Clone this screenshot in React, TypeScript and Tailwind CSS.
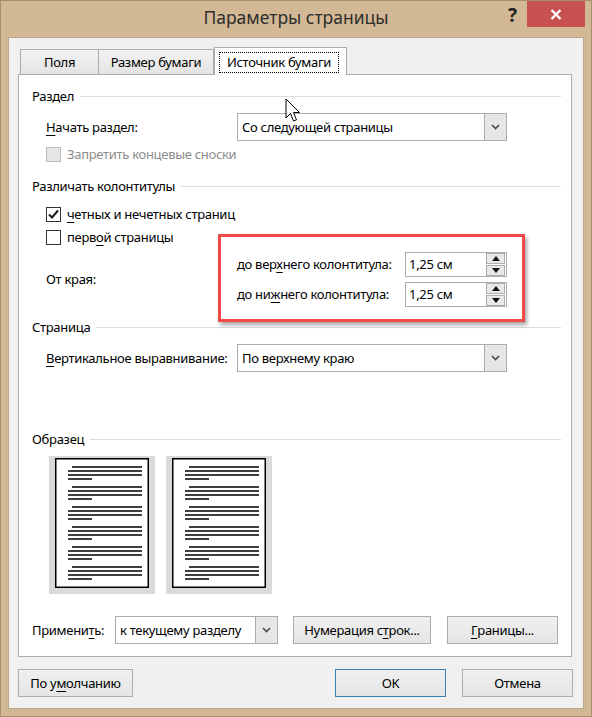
import React from "react";

const FONT = { fontFamily: '"Noto Sans", "Open Sans", sans-serif' };

function U({ children }: { children: React.ReactNode }) {
  return <span className="underline decoration-1 underline-offset-[3px]">{children}</span>;
}

function Header({ label, className = "" }: { label: string; className?: string }) {
  return (
    <div className={"flex h-[18px] items-center pl-[13px] pr-[10px] " + className}>
      <span className="text-black">{label}</span>
      <div className="ml-[6px] h-px flex-1 bg-[#dcdcdc]" />
    </div>
  );
}

function Chevron() {
  return (
    <svg width="9" height="6" viewBox="0 0 9 6">
      <path d="M1 1 L4.5 4.5 L8 1" stroke="#4a4a4a" strokeWidth="1.6" fill="none" />
    </svg>
  );
}

function Select({ value, className = "" }: { value: string; className?: string }) {
  return (
    <div className={"flex h-[28px] border border-[#acacac] bg-white " + className}>
      <div className="flex flex-1 items-center pl-[4px] text-black">{value}</div>
      <div className="flex w-[22px] items-center justify-center border-l border-[#acacac] bg-[#e6e6e6]">
        <Chevron />
      </div>
    </div>
  );
}

function Checkbox({ checked = false, disabled = false }: { checked?: boolean; disabled?: boolean }) {
  return (
    <div
      className={
        "flex h-[15px] w-[15px] items-center justify-center border " +
        (disabled ? "border-[#bcbcbc] bg-[#e6e6e6]" : "border-[#333333] bg-white")
      }
    >
      {checked && (
        <svg width="13" height="13" viewBox="0 0 13 13">
          <path d="M2 6.5 L5 9.5 L11 2.5" stroke="#1a1a1a" strokeWidth="2" fill="none" />
        </svg>
      )}
    </div>
  );
}

function Spinner({ value }: { value: string }) {
  return (
    <div className="flex h-[25px] w-[102px] border border-[#abadb3] bg-white">
      <div className="flex flex-1 items-center pl-[3px] text-black">{value}</div>
      <div className="flex flex-col justify-center gap-px pr-[1px]">
        <div className="flex h-[11px] w-[19px] items-center justify-center border border-[#acacac] bg-[#e8e8e8]">
          <svg width="8" height="5" viewBox="0 0 8 5">
            <path d="M0 5 L4 0 L8 5 Z" fill="#111" />
          </svg>
        </div>
        <div className="flex h-[11px] w-[19px] items-center justify-center border border-[#acacac] bg-[#e8e8e8]">
          <svg width="8" height="5" viewBox="0 0 8 5">
            <path d="M0 0 L8 0 L4 5 Z" fill="#111" />
          </svg>
        </div>
      </div>
    </div>
  );
}

function Button({ children, className = "", focused = false }: { children: React.ReactNode; className?: string; focused?: boolean }) {
  return (
    <div
      className={
        "flex h-[28px] items-center justify-center border bg-gradient-to-b from-[#f0f0f0] to-[#e5e5e5] text-black " +
        (focused ? "border-[#3c7fb1] " : "border-[#acacac] ") +
        className
      }
    >
      {children}
    </div>
  );
}

function PagePreview() {
  const groups = [0, 1, 2, 3, 4, 5];
  return (
    <svg width="106" height="138" viewBox="0 0 106 138">
      <rect x="0" y="0" width="106" height="138" fill="#dadada" />
      <rect x="6.75" y="2.75" width="92.5" height="128.5" fill="#ffffff" stroke="#000" strokeWidth="1.5" />
      {groups.map((g) => {
        const y = 2 + 9 + g * 20;
        return (
          <g key={g} stroke="#000" strokeWidth="1.5">
            <line x1={6 + 17} y1={y} x2={6 + 87} y2={y} />
            <line x1={6 + 13} y1={y + 4} x2={6 + 87} y2={y + 4} />
            <line x1={6 + 13} y1={y + 8} x2={6 + 87} y2={y + 8} />
            <line x1={6 + 13} y1={y + 12} x2={6 + 37} y2={y + 12} />
          </g>
        );
      })}
    </svg>
  );
}

export default function App() {
  return (
    <div
      className="relative h-[717px] w-[592px] overflow-hidden whitespace-nowrap border border-[#a58f6d] bg-[#d3b895] text-[13px] leading-none"
      style={FONT}
    >
      {/* Title bar */}
      <div className="relative flex h-[36px] items-start">
        <div className="flex h-[36px] flex-1 items-center justify-center pb-[2px] text-[17.5px] text-[#2d2d2d]">
          Параметры страницы
        </div>
        <div className="absolute right-[6px] top-0 flex items-start">
          <div className="mr-[10px] mt-[5px] text-[19px] font-bold text-[#222]">?</div>
          <div className="flex h-[26px] w-[58px] items-center justify-center bg-[#c75050]">
            <svg width="12" height="11" viewBox="0 0 12 11">
              <path d="M1.5 1 L10.5 10 M10.5 1 L1.5 10" stroke="#fff" strokeWidth="2.4" />
            </svg>
          </div>
        </div>
      </div>

      {/* Client area */}
      <div className="ml-[7px] flex h-[672px] w-[576px] flex-col border border-[#bba788] bg-[#f0f0f0] tracking-[-0.3px]">
        <div className="ml-[9px] mt-[9px] w-[554px]">
          {/* Tabs */}
          <div className="flex h-[27px] items-end pl-[2px]">
            <div className="flex h-[25px] w-[79px] items-center justify-center border border-b-0 border-[#acacac] bg-gradient-to-b from-[#f2f2f2] to-[#e4e4e4] text-black">
              Поля
            </div>
            <div className="flex h-[25px] w-[115px] items-center justify-center border border-b-0 border-l-0 border-[#acacac] bg-gradient-to-b from-[#f2f2f2] to-[#e4e4e4] text-black">
              Размер бумаги
            </div>
            <div className="relative z-10 -mb-px flex h-[28px] w-[133px] items-start border border-b-0 border-[#acacac] bg-white pl-[4px] pr-[7px] pt-[4px]">
              <div className="flex h-[21px] flex-1 items-center justify-center border border-dotted border-black text-black">
                Источник бумаги
              </div>
            </div>
          </div>

          {/* Panel */}
          <div className="relative flex h-[583px] flex-col border border-[#acacac] bg-white">
            <Header label="Раздел" className="mt-[12px]" />
            <div className="mt-[8px] flex h-[28px] items-center pl-[27px]">
              <div className="w-[191px] text-black">
                <U>Н</U>ачать раздел:
              </div>
              <Select value="Со следующей страницы" className="w-[270px]" />
            </div>
            <div className="mt-[5px] flex h-[17px] items-center pl-[27px]">
              <Checkbox disabled />
              <span className="ml-[6px] text-[#8c8c8c]">Запретить концевые сноски</span>
            </div>

            <Header label="Различать колонтитулы" className="mt-[14px]" />
            <div className="mt-[11px] flex h-[17px] items-center pl-[27px]">
              <Checkbox checked />
              <span className="ml-[6px] text-black">
                <U>ч</U>етных и нечетных страниц
              </span>
            </div>
            <div className="mt-[6px] flex h-[17px] items-center pl-[27px]">
              <Checkbox />
              <span className="ml-[6px] text-black">
                перв<U>о</U>й страницы
              </span>
            </div>
            <div className="mt-[6px] flex items-center pl-[27px]">
              <div className="w-[191px] text-black">От края:</div>
              <div className="flex flex-col gap-[5px]">
                <div className="flex items-center">
                  <div className="w-[168px] text-black">
                    до вер<U>х</U>него колонтитула:
                  </div>
                  <Spinner value="1,25 см" />
                </div>
                <div className="flex items-center">
                  <div className="w-[168px] text-black">
                    до ни<U>ж</U>него колонтитула:
                  </div>
                  <Spinner value="1,25 см" />
                </div>
              </div>
            </div>

            <Header label="Страница" className="mt-[11px]" />
            <div className="mt-[8px] flex h-[28px] items-center pl-[27px]">
              <div className="w-[191px] text-black">
                <U>В</U>ертикальное выравнивание:
              </div>
              <Select value="По верхнему краю" className="w-[270px]" />
            </div>

            <Header label="Образец" className="mt-[58px]" />
            <div className="mt-[8px] flex gap-[11px] pl-[30px]">
              <PagePreview />
              <PagePreview />
            </div>

            <div className="mt-[22px] flex h-[28px] items-center pl-[13px]">
              <div className="w-[83px] text-black">
                Примени<U>т</U>ь:
              </div>
              <Select value="к текущему разделу" className="w-[163px]" />
              <Button className="ml-[15px] w-[138px]">
                Нумерация с<U>т</U>рок...
              </Button>
              <Button className="ml-[16px] w-[111px]">
                <U>Г</U>раницы...
              </Button>
            </div>

            {/* red highlight annotation */}
            <div className="pointer-events-none absolute left-[199px] top-[159px] h-[88px] w-[307px] border-[3px] border-[#f24848] shadow-[2px_3px_4px_rgba(0,0,0,0.35)]" />
          </div>
        </div>

        {/* Bottom buttons */}
        <div className="ml-[9px] mr-[10px] mt-[12px] flex">
          <Button className="w-[115px]">
            По у<U>м</U>олчанию
          </Button>
          <div className="flex-1" />
          <Button className="w-[111px]" focused>
            OK
          </Button>
          <Button className="ml-[16px] w-[111px]">Отмена</Button>
        </div>
      </div>

      {/* Mouse cursor */}
      <svg className="pointer-events-none absolute left-[284px] top-[97px]" width="16" height="26" viewBox="0 0 16 26">
        <path
          d="M1 1 L1 20 L5.5 15.5 L8.5 23 L11.5 21.8 L8.5 14.5 L14.5 14.5 Z"
          fill="#fff"
          stroke="#000"
          strokeWidth="1"
          strokeLinejoin="miter"
        />
      </svg>
    </div>
  );
}
